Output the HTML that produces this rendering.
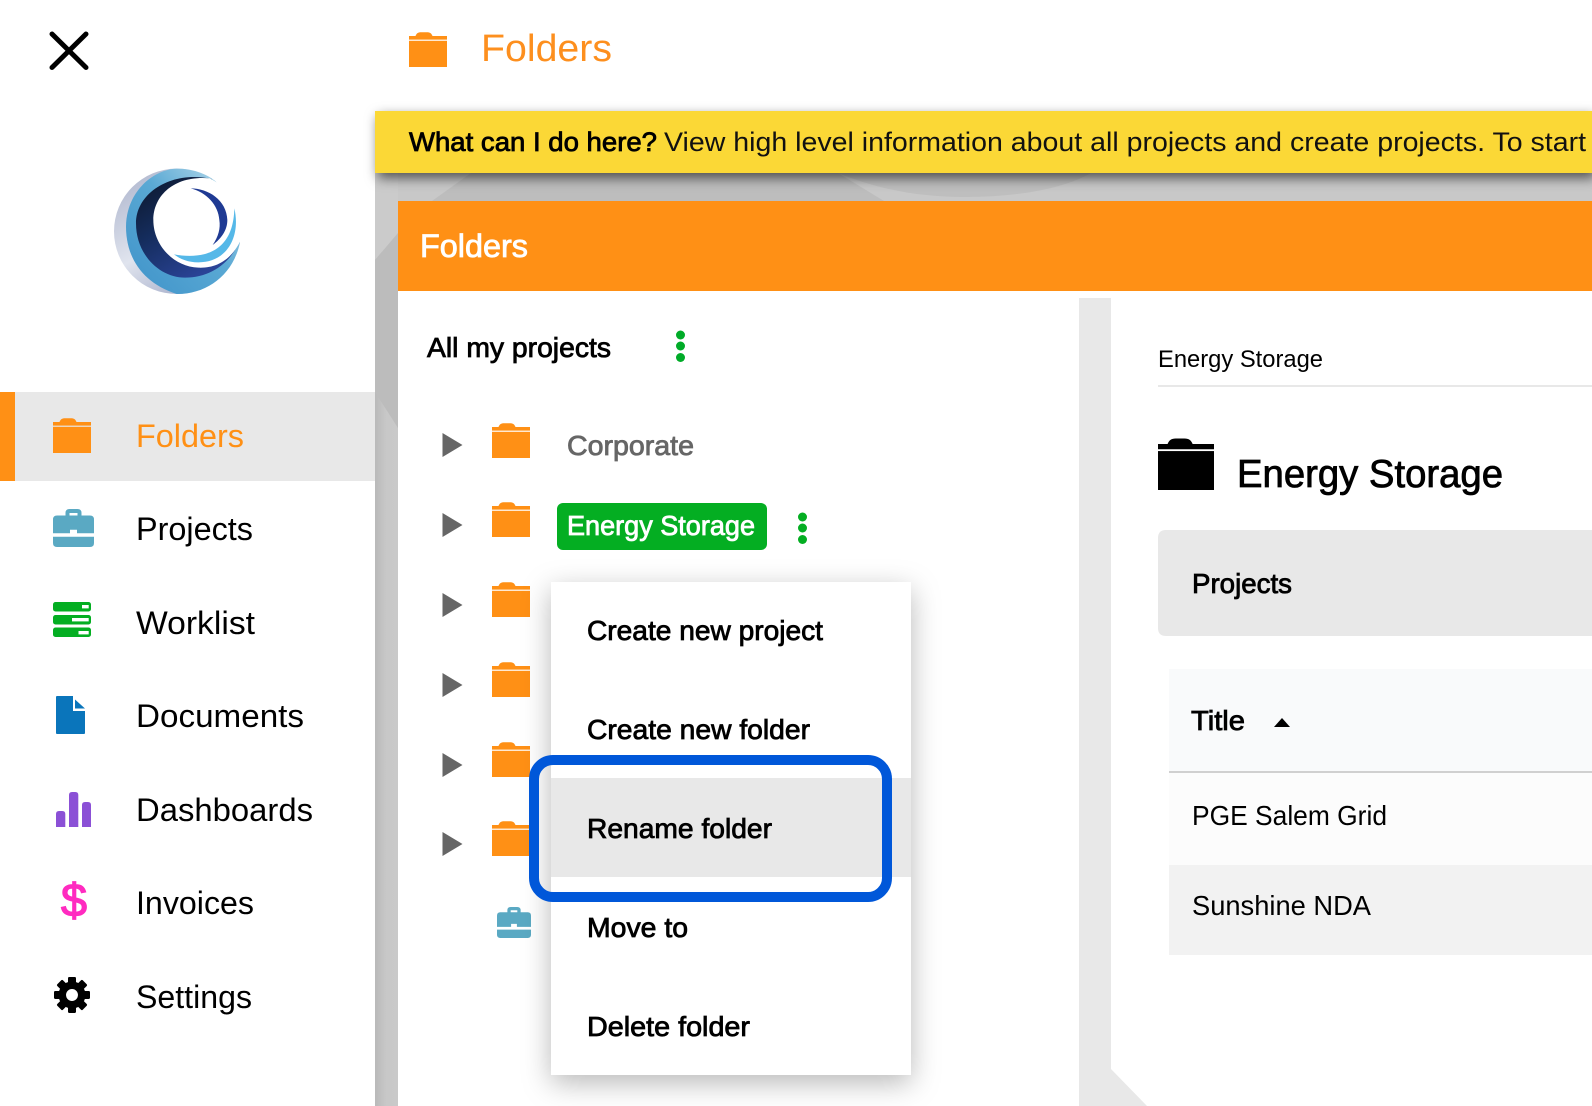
<!DOCTYPE html>
<html>
<head>
<meta charset="utf-8">
<title>Folders</title>
<style>
html,body{margin:0;padding:0;background:#fff;width:1592px;height:1106px;overflow:hidden}
svg{display:block;position:absolute;left:0;top:0}
text{font-family:"Liberation Sans",sans-serif;white-space:pre}
.s{stroke-width:.8px;paint-order:stroke}
</style>
</head>
<body>
<svg width="1592" height="1106" viewBox="0 0 1592 1106" xmlns="http://www.w3.org/2000/svg">
<defs>
<symbol id="fo" viewBox="0 0 38 35" preserveAspectRatio="none"><path d="M0 7.6V4H6.5C7.5 1.5 9 .3 12 .3H18C21 .3 22.5 1.5 23.5 4H38V7.6Z"/><rect y="8.800" width="38" height="26.200"/></symbol>
<symbol id="br" viewBox="0 0 41 38" preserveAspectRatio="none"><path d="M0 10.5Q0 6.500 4 6.500H37Q41 6.500 41 10.500V24.300H24V20.700H17V24.300H0Z"/><path d="M0 27.700H41V34Q41 38 37 38H4Q0 38 0 34Z"/><path d="M14.500 7V4Q14.500 2 16.500 2H24.500Q26.500 2 26.500 4V7" fill="none" stroke-width="4" style="stroke:inherit"/></symbol>
<linearGradient id="lb" x1="0" y1="1" x2="1" y2="0"><stop offset="0" stop-color="#3e92c9"/><stop offset=".55" stop-color="#5aa9d4"/><stop offset="1" stop-color="#c2e0ee"/></linearGradient>
<linearGradient id="lg" x1="0" y1="0" x2=".6" y2="1"><stop offset="0" stop-color="#a9b1ca"/><stop offset=".6" stop-color="#e0e4ee"/><stop offset="1" stop-color="#a8b0cb"/></linearGradient>
<linearGradient id="dk" x1="0" y1="0" x2=".6" y2="1"><stop offset="0" stop-color="#0c1628"/><stop offset=".5" stop-color="#152d5e"/><stop offset="1" stop-color="#2a4396"/></linearGradient>
<linearGradient id="edge" x1="0" y1="0" x2="1" y2="0"><stop offset="0" stop-color="#b9b9b9"/><stop offset=".5" stop-color="#c8c8c8"/><stop offset="1" stop-color="#c9c9c9"/></linearGradient>
</defs>

<!-- gray background -->
<rect x="375" y="173" width="1217" height="933" fill="#c8c8c8"/>
<rect x="375" y="173" width="23" height="933" fill="url(#edge)"/>
<polygon points="375,173 398,173 398,233 375,260" fill="#cbcbcb"/>
<polygon points="375,260 398,233 398,428 375,392" fill="#bcbcbc"/>
<polygon points="432,201 471,173 838,173 884,201" fill="#bdbdbd"/>
<path d="M838 173C880 190 920 197 965 197C1020 197 1065 188 1091 173Z" fill="#bebebe"/>
<!-- yellow bar -->
<rect x="375" y="111" width="1217" height="62" fill="#fbd836" style="filter:drop-shadow(3px 5px 6px rgba(0,0,0,.6))"/>
<!-- panel -->
<rect x="398" y="291" width="1194" height="815" fill="#fff"/>
<rect x="398" y="201" width="1194" height="90" fill="#ff9015"/>

<!-- sidebar -->
<rect x="0" y="392" width="375" height="89" fill="#e8e8e8"/>
<rect x="0" y="392" width="15" height="89" fill="#ff9015"/>
<g stroke="#000" stroke-width="5" stroke-linecap="round"><line x1="52" y1="34" x2="86" y2="67.500"/><line x1="86" y1="34" x2="52" y2="67.500"/></g>

<!-- logo -->
<svg x="100" y="155" width="160" height="160" viewBox="0 0 480 480">
<circle cx="230" cy="229" r="188" fill="url(#lg)"/>
<path d="M230 41C285 41 325 60 350 82L420 262C400 360 320 418 230 417C130 385 78 310 78 215C78 120 150 45 230 41Z" fill="url(#lb)"/>
<path d="M335 72C220 45 108 110 108 205C108 300 180 368 255 368C320 368 375 335 405 285L340 150Z" fill="url(#dk)"/>
<path d="M350 82C330 60 380 60 440 120V250L425 250C395 315 350 340 295 338C220 335 160 270 160 195C160 120 225 60 330 70Z" fill="#fff"/>
<path d="M222 298C300 312 400 300 403 160C422 240 385 322 295 322C265 322 240 312 222 298Z" fill="#55b8e8"/>
<path d="M272 100C325 100 380 135 382 195C382 225 365 250 338 270C355 245 362 220 358 195C355 150 320 112 272 100Z" fill="#1f3a93"/>
</svg>

<!-- sidebar icons -->
<use href="#fo" x="53" y="418" width="38" height="35" fill="#ff9015"/>
<use href="#br" x="53" y="509" width="41" height="38" fill="#5aa9c3" stroke="#5aa9c3" stroke-width="0"/>
<g fill="#04ae22"><rect x="53" y="602" width="38" height="9.500" rx="2.500"/><rect x="53" y="615" width="38" height="9.500" rx="2.500"/><rect x="53" y="627.500" width="38" height="9.500" rx="2.500"/></g>
<g fill="#fff"><rect x="82" y="605" width="6.700" height="3.400"/><rect x="72" y="618" width="16.700" height="3.400"/><rect x="78.500" y="631" width="10.200" height="3.400"/></g>
<path d="M57 696H73V711H85V733Q85 734 84 734H57Q56 734 56 733V697Q56 696 57 696Z" fill="#0a75bb"/>
<path d="M75 699.500V708.500H85Z" fill="#0a75bb"/>
<g fill="#8b50d6"><path d="M56 827V814Q56 811 59 811H62.300Q65.300 811 65.300 814V827Z"/><path d="M69 827V795Q69 792 72 792H75.300Q78.300 792 78.300 795V827Z"/><path d="M82 827V805Q82 802 85 802H88Q91 802 91 805V827Z"/></g>
<text x="61" y="916" font-size="46" fill="#ff2bc0" stroke="#ff2bc0" stroke-width="1.300" textLength="26" lengthAdjust="spacingAndGlyphs">$</text>
<g transform="translate(72 995)">
<circle r="9.700" fill="none" stroke="#000" stroke-width="7.500"/>
<g fill="#000"><rect x="-4" y="-18" width="8" height="7" rx="1.200"/><rect x="-4" y="-18" width="8" height="7" rx="1.200" transform="rotate(45)"/><rect x="-4" y="-18" width="8" height="7" rx="1.200" transform="rotate(90)"/><rect x="-4" y="-18" width="8" height="7" rx="1.200" transform="rotate(135)"/><rect x="-4" y="-18" width="8" height="7" rx="1.200" transform="rotate(180)"/><rect x="-4" y="-18" width="8" height="7" rx="1.200" transform="rotate(225)"/><rect x="-4" y="-18" width="8" height="7" rx="1.200" transform="rotate(270)"/><rect x="-4" y="-18" width="8" height="7" rx="1.200" transform="rotate(315)"/></g>
</g>

<!-- sidebar text -->
<g font-size="32">
<text x="136" y="447" fill="#ff9015" textLength="108" lengthAdjust="spacingAndGlyphs">Folders</text>
<text x="136" y="540" fill="#000" textLength="117" lengthAdjust="spacingAndGlyphs">Projects</text>
<text x="136" y="634" fill="#000" textLength="119" lengthAdjust="spacingAndGlyphs">Worklist</text>
<text x="136" y="727" fill="#000" textLength="168" lengthAdjust="spacingAndGlyphs">Documents</text>
<text x="136" y="821" fill="#000" textLength="177" lengthAdjust="spacingAndGlyphs">Dashboards</text>
<text x="136" y="914" fill="#000" textLength="118" lengthAdjust="spacingAndGlyphs">Invoices</text>
<text x="136" y="1008" fill="#000" textLength="116" lengthAdjust="spacingAndGlyphs">Settings</text>
</g>

<!-- header -->
<use href="#fo" x="409" y="32" width="38" height="35" fill="#ff9015"/>
<text x="481" y="61" font-size="38" fill="#fd8f1e" textLength="131" lengthAdjust="spacingAndGlyphs">Folders</text>

<!-- banner text -->
<text x="409" y="151" font-size="27" class="s" fill="#000" stroke="#000" textLength="248" lengthAdjust="spacingAndGlyphs">What can I do here?</text>
<text x="664" y="151" font-size="27" fill="#111" textLength="922" lengthAdjust="spacingAndGlyphs">View high level information about all projects and create projects. To start</text>

<!-- panel title -->
<text x="420" y="257" font-size="32" class="s" fill="#fff" stroke="#fff" textLength="108" lengthAdjust="spacingAndGlyphs">Folders</text>

<!-- tree -->
<text x="427" y="357" font-size="28" class="s" fill="#000" stroke="#000" textLength="184" lengthAdjust="spacingAndGlyphs">All my projects</text>
<g fill="#00ab28"><circle cx="680.500" cy="335" r="4.500"/><circle cx="680.500" cy="346" r="4.500"/><circle cx="680.500" cy="357.500" r="4.500"/></g>

<g fill="#666">
<path d="M442.500 433L462.500 445L442.500 457Z"/><path d="M442.500 513L462.500 525L442.500 537Z"/><path d="M442.500 593L462.500 605L442.500 617Z"/><path d="M442.500 673L462.500 685L442.500 697Z"/><path d="M442.500 753L462.500 765L442.500 777Z"/><path d="M442.500 832L462.500 844L442.500 856Z"/>
</g>
<g fill="#ff9015">
<use href="#fo" x="492" y="423" width="38" height="35"/>
<use href="#fo" x="492" y="502" width="38" height="35"/>
<use href="#fo" x="492" y="582" width="38" height="35"/>
<use href="#fo" x="492" y="662" width="38" height="35"/>
<use href="#fo" x="492" y="742" width="38" height="35"/>
<use href="#fo" x="492" y="821" width="38" height="35"/>
</g>
<use href="#br" x="497" y="907" width="34" height="31" fill="#5aa9c3" stroke="#5aa9c3" stroke-width="0"/>

<text x="567" y="455" font-size="28" class="s" fill="#666" stroke="#666" textLength="127" lengthAdjust="spacingAndGlyphs">Corporate</text>
<rect x="557" y="503" width="210" height="47" rx="6" fill="#04ae22"/>
<text x="567" y="535" font-size="28" class="s" fill="#fff" stroke="#fff" textLength="188" lengthAdjust="spacingAndGlyphs">Energy Storage</text>
<g fill="#04ae22"><circle cx="802.500" cy="517" r="4.500"/><circle cx="802.500" cy="528" r="4.500"/><circle cx="802.500" cy="539.500" r="4.500"/></g>

<!-- right pane -->
<path d="M1079 298H1111V1069L1147 1106H1079Z" fill="#e8e8e8"/>
<text x="1158" y="367" font-size="24" fill="#000" textLength="165" lengthAdjust="spacingAndGlyphs">Energy Storage</text>
<rect x="1158" y="385" width="434" height="2" fill="#e8e8e8"/>
<use href="#fo" x="1158" y="438" width="56" height="52" fill="#000"/>
<text x="1237" y="487" font-size="39" class="s" fill="#000" stroke="#000" textLength="266" lengthAdjust="spacingAndGlyphs">Energy Storage</text>
<path d="M1592 530H1166Q1158 530 1158 538V628Q1158 636 1166 636H1592Z" fill="#e8e8e8"/>
<text x="1192" y="593" font-size="28" class="s" fill="#000" stroke="#000" textLength="100" lengthAdjust="spacingAndGlyphs">Projects</text>
<rect x="1169" y="669" width="423" height="102" fill="#f9fafb"/>
<rect x="1169" y="771" width="423" height="2" fill="#d0d0d0"/>
<text x="1191" y="730" font-size="28" class="s" fill="#000" stroke="#000" textLength="54" lengthAdjust="spacingAndGlyphs">Title</text>
<path d="M1274 727L1282 718L1290 727Z" fill="#000"/>
<rect x="1169" y="773" width="423" height="92" fill="#fcfcfc"/>
<rect x="1169" y="865" width="423" height="90" fill="#f2f2f2"/>
<text x="1192" y="825" font-size="28" fill="#000" textLength="195" lengthAdjust="spacingAndGlyphs">PGE Salem Grid</text>
<text x="1192" y="915" font-size="28" fill="#000" textLength="179" lengthAdjust="spacingAndGlyphs">Sunshine NDA</text>

<!-- menu -->
<rect x="551" y="582" width="360" height="493" fill="#fff" style="filter:drop-shadow(0 8px 14px rgba(0,0,0,.28))"/>
<rect x="551" y="778" width="360" height="99" fill="#e8e8e8"/>
<g font-size="28" class="s" fill="#000" stroke="#000">
<text x="587" y="640" textLength="236" lengthAdjust="spacingAndGlyphs">Create new project</text>
<text x="587" y="739" textLength="223" lengthAdjust="spacingAndGlyphs">Create new folder</text>
<text x="587" y="838" textLength="185" lengthAdjust="spacingAndGlyphs">Rename folder</text>
<text x="587" y="937" textLength="101" lengthAdjust="spacingAndGlyphs">Move to</text>
<text x="587" y="1036" textLength="163" lengthAdjust="spacingAndGlyphs">Delete folder</text>
</g>
<rect x="534" y="760" width="353" height="137" rx="19" fill="none" stroke="#0057d9" stroke-width="10"/>
</svg>
</body>
</html>
